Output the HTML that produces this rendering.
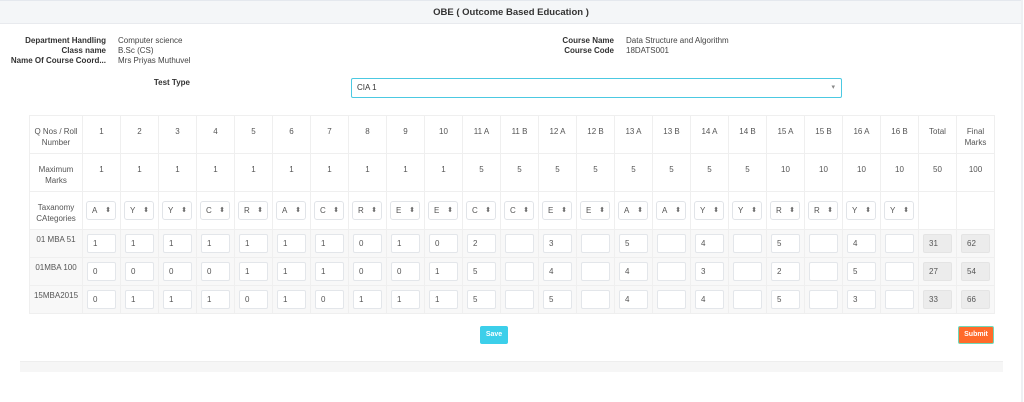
<!DOCTYPE html>
<html><head><meta charset="utf-8"><style>
*{box-sizing:border-box;margin:0;padding:0}
body{width:1024px;height:402px;background:#fff;font-family:"Liberation Sans",sans-serif;font-size:8px;color:#444;position:relative;overflow:hidden}
.hdr{position:absolute;left:0;top:0;width:1022px;height:24px;background:#f4f6f8;border-bottom:1px solid #e8eaee;border-top:1px solid #e4e8ee;text-align:center;line-height:24px;font-size:9.5px;font-weight:bold;color:#333}
.vr{position:absolute;left:1021px;top:0;width:2px;height:402px;background:#eef0f3}
.lab{position:absolute;font-weight:bold;color:#333;text-align:right;font-size:8px}
.val{position:absolute;color:#444;font-size:8px}
.sel{position:absolute;left:351px;top:78px;width:491px;height:20px;border:1px solid #4cc9e2;border-radius:2px;line-height:18px;padding-left:5px;font-size:8px;color:#333}
.sel:after{content:"▾";position:absolute;right:6px;top:0;font-size:7px;color:#888}
table{position:absolute;left:29px;top:115px;border-collapse:collapse;table-layout:fixed;width:965px}
td{border:1px solid #efefef;text-align:center;vertical-align:top;font-size:8px;color:#555;padding:0}
tr.h td{height:38px;padding-top:10px;line-height:11px}
tr.d td{height:28px;background:#f8f8f8;padding-top:0}
tr.d td:first-child{padding-top:5px}
.i{display:block;margin:4px auto 0 4px;width:29px;height:19px;border:1px solid #e3e6ea;border-radius:2px;background:#fff;text-align:left;padding-left:5px;line-height:17px;font-size:8px}
.g{background:#ececec;border-color:#e4e4e4}
.s{display:block;margin:-1px 0 0 3px;width:30px;height:19px;border:1px solid #e1e4e8;border-radius:3px;background:#fff;text-align:left;padding-left:5px;line-height:17px;position:relative;font-size:8px}
.s:after{content:"⬍";position:absolute;right:4px;top:0;font-size:7px;color:#666}
.btn{position:absolute;color:#fff;font-weight:bold;font-size:7px;text-align:center;border-radius:2px}
.ft{position:absolute;left:20px;top:361px;width:983px;height:11px;background:#f6f6f6;border-top:1px solid #eee}
</style></head><body>
<div class="hdr">OBE ( Outcome Based Education )</div>
<div class="vr"></div>
<div class="lab" style="left:0;width:106px;top:36px;line-height:10px">Department Handling<br>Class name<br>Name Of Course Coord...</div>
<div class="val" style="left:118px;top:36px;line-height:10px">Computer science<br>B.Sc (CS)<br>Mrs Priyas Muthuvel</div>
<div class="lab" style="left:500px;width:114px;top:36px;line-height:10px">Course Name<br>Course Code</div>
<div class="val" style="left:626px;top:36px;line-height:10px">Data Structure and Algorithm<br>18DATS001</div>
<div class="lab" style="left:150px;width:40px;top:78px">Test Type</div>
<div class="sel">CIA 1</div>
<table>
<colgroup><col style="width:53px"><col span="24" style="width:38px"></colgroup>
<tr class="h"><td>Q Nos / Roll Number</td><td>1</td><td>2</td><td>3</td><td>4</td><td>5</td><td>6</td><td>7</td><td>8</td><td>9</td><td>10</td><td>11 A</td><td>11 B</td><td>12 A</td><td>12 B</td><td>13 A</td><td>13 B</td><td>14 A</td><td>14 B</td><td>15 A</td><td>15 B</td><td>16 A</td><td>16 B</td><td>Total</td><td>Final Marks</td></tr>
<tr class="h"><td>Maximum Marks</td><td>1</td><td>1</td><td>1</td><td>1</td><td>1</td><td>1</td><td>1</td><td>1</td><td>1</td><td>1</td><td>5</td><td>5</td><td>5</td><td>5</td><td>5</td><td>5</td><td>5</td><td>5</td><td>10</td><td>10</td><td>10</td><td>10</td><td>50</td><td>100</td></tr>
<tr class="h"><td>Taxanomy CAtegories</td>
<td><span class="s">A</span></td><td><span class="s">Y</span></td><td><span class="s">Y</span></td><td><span class="s">C</span></td><td><span class="s">R</span></td><td><span class="s">A</span></td><td><span class="s">C</span></td><td><span class="s">R</span></td><td><span class="s">E</span></td><td><span class="s">E</span></td><td><span class="s">C</span></td><td><span class="s">C</span></td><td><span class="s">E</span></td><td><span class="s">E</span></td><td><span class="s">A</span></td><td><span class="s">A</span></td><td><span class="s">Y</span></td><td><span class="s">Y</span></td><td><span class="s">R</span></td><td><span class="s">R</span></td><td><span class="s">Y</span></td><td><span class="s">Y</span></td><td></td><td></td></tr>
<tr class="d"><td>01 MBA 51</td><td><span class="i">1</span></td><td><span class="i">1</span></td><td><span class="i">1</span></td><td><span class="i">1</span></td><td><span class="i">1</span></td><td><span class="i">1</span></td><td><span class="i">1</span></td><td><span class="i">0</span></td><td><span class="i">1</span></td><td><span class="i">0</span></td><td><span class="i">2</span></td><td><span class="i"></span></td><td><span class="i">3</span></td><td><span class="i"></span></td><td><span class="i">5</span></td><td><span class="i"></span></td><td><span class="i">4</span></td><td><span class="i"></span></td><td><span class="i">5</span></td><td><span class="i"></span></td><td><span class="i">4</span></td><td><span class="i"></span></td><td><span class="i g">31</span></td><td><span class="i g">62</span></td></tr>
<tr class="d"><td>01MBA 100</td><td><span class="i">0</span></td><td><span class="i">0</span></td><td><span class="i">0</span></td><td><span class="i">0</span></td><td><span class="i">1</span></td><td><span class="i">1</span></td><td><span class="i">1</span></td><td><span class="i">0</span></td><td><span class="i">0</span></td><td><span class="i">1</span></td><td><span class="i">5</span></td><td><span class="i"></span></td><td><span class="i">4</span></td><td><span class="i"></span></td><td><span class="i">4</span></td><td><span class="i"></span></td><td><span class="i">3</span></td><td><span class="i"></span></td><td><span class="i">2</span></td><td><span class="i"></span></td><td><span class="i">5</span></td><td><span class="i"></span></td><td><span class="i g">27</span></td><td><span class="i g">54</span></td></tr>
<tr class="d"><td>15MBA2015</td><td><span class="i">0</span></td><td><span class="i">1</span></td><td><span class="i">1</span></td><td><span class="i">1</span></td><td><span class="i">0</span></td><td><span class="i">1</span></td><td><span class="i">0</span></td><td><span class="i">1</span></td><td><span class="i">1</span></td><td><span class="i">1</span></td><td><span class="i">5</span></td><td><span class="i"></span></td><td><span class="i">5</span></td><td><span class="i"></span></td><td><span class="i">4</span></td><td><span class="i"></span></td><td><span class="i">4</span></td><td><span class="i"></span></td><td><span class="i">5</span></td><td><span class="i"></span></td><td><span class="i">3</span></td><td><span class="i"></span></td><td><span class="i g">33</span></td><td><span class="i g">66</span></td></tr>
</table>
<div class="btn" style="left:480px;top:326px;width:28px;height:18px;line-height:18px;background:#3ccfea">Save</div>
<div class="btn" style="left:958px;top:326px;width:36px;height:18px;line-height:16px;background:#ff6a2a;border:1px solid #6fd8b8">Submit</div>
<div class="ft"></div>
</body></html>
